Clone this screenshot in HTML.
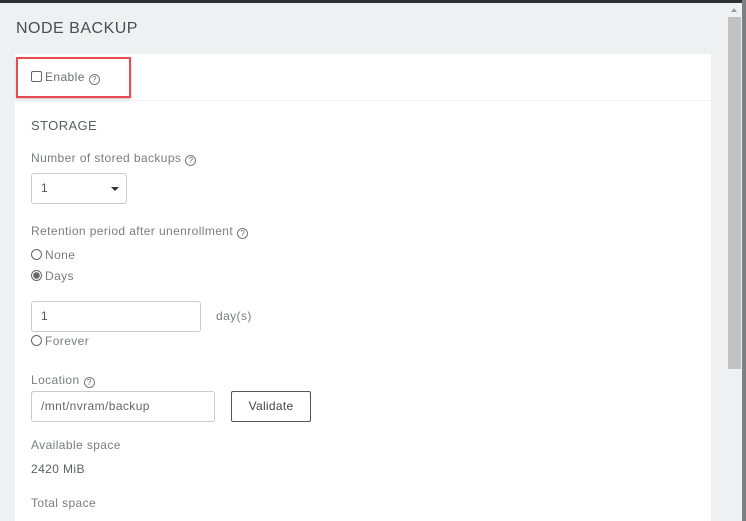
<!DOCTYPE html>
<html><head><meta charset="utf-8"><style>
*{margin:0;padding:0;box-sizing:border-box}
body{width:746px;height:521px;overflow:hidden;background:#eff0f2;font-family:"Liberation Sans",sans-serif;position:relative;color:#6f7174}
.a{position:absolute}
.t{font-size:12px;letter-spacing:0.4px;color:#7a7c80;white-space:nowrap}
.q{display:inline-block;width:11px;height:11px;border:1px solid #777;border-radius:50%;font-size:8px;line-height:9px;text-align:center;color:#666;vertical-align:-1px;margin-left:4px;letter-spacing:0}
.r{display:inline-block;width:11px;height:11px;border:1px solid #666;border-radius:50%;vertical-align:-1px;margin-right:3px;background:#fff}
.in{border:1px solid #c9cbcf;border-radius:3px;background:#fff;font-size:12px;letter-spacing:0.4px;color:#555;padding-left:9px}
</style></head><body>
<div class="a" style="left:0;top:0;width:746px;height:3px;background:#2c2f33"></div>
<div class="a" style="left:742px;top:0;width:4px;height:521px;background:#7d7f82"></div>
<div class="a" style="left:16px;top:20px;font-size:16px;letter-spacing:0.5px;color:#4a4d52">NODE BACKUP</div>
<div class="a" style="left:15px;top:54px;width:696px;height:467px;background:#fff"></div>
<div class="a" style="left:15px;top:100px;width:696px;height:1px;background:#f1f2f3"></div>
<div class="a" style="left:16px;top:57px;width:115px;height:41px;border:2px solid #ea4a4f;box-shadow:0 1px 2px rgba(0,0,0,.25)"></div>
<div class="a t" style="left:31px;top:70px;color:#6b6d70"><span style="display:inline-block;width:11px;height:11px;border:1px solid #666;border-radius:2px;vertical-align:-1px;margin-right:3px"></span>Enable<span class="q">?</span></div>
<div class="a" style="left:31px;top:118px;font-size:13px;letter-spacing:0.4px;color:#5b5e62">STORAGE</div>
<div class="a t" style="left:31px;top:151px">Number of stored backups<span class="q">?</span></div>
<div class="a in" style="left:31px;top:173px;width:96px;height:31px;line-height:29px">1<span style="position:absolute;left:79px;top:13px;border:4px solid transparent;border-top:4px solid #333;border-bottom:0"></span></div>
<div class="a t" style="left:31px;top:224px">Retention period after unenrollment<span class="q">?</span></div>
<div class="a t" style="left:31px;top:248px"><span class="r"></span>None</div>
<div class="a t" style="left:31px;top:269px"><span class="r" style="background:radial-gradient(circle,#666 0 3px,#fff 3.5px)"></span>Days</div>
<div class="a in" style="left:31px;top:301px;width:170px;height:31px;line-height:29px">1</div>
<div class="a t" style="left:216px;top:309px">day(s)</div>
<div class="a t" style="left:31px;top:334px"><span class="r"></span>Forever</div>
<div class="a t" style="left:31px;top:373px">Location<span class="q">?</span></div>
<div class="a in" style="left:31px;top:391px;width:184px;height:31px;line-height:29px;color:#666">/mnt/nvram/backup</div>
<div class="a" style="left:231px;top:391px;width:80px;height:31px;border:1.5px solid #555;border-radius:2px;font-size:12px;letter-spacing:0.3px;color:#444;text-align:center;line-height:28px">Validate</div>
<div class="a t" style="left:31px;top:438px">Available space</div>
<div class="a t" style="left:31px;top:462px;color:#5e6064">2420 MiB</div>
<div class="a t" style="left:31px;top:496px">Total space</div>
<div class="a" style="left:728px;top:17px;width:13px;height:352px;background:#c1c1c1"></div>
<div class="a" style="left:731px;top:8px;border:3px solid transparent;border-bottom:4px solid #999;border-top:0"></div>
</body></html>
